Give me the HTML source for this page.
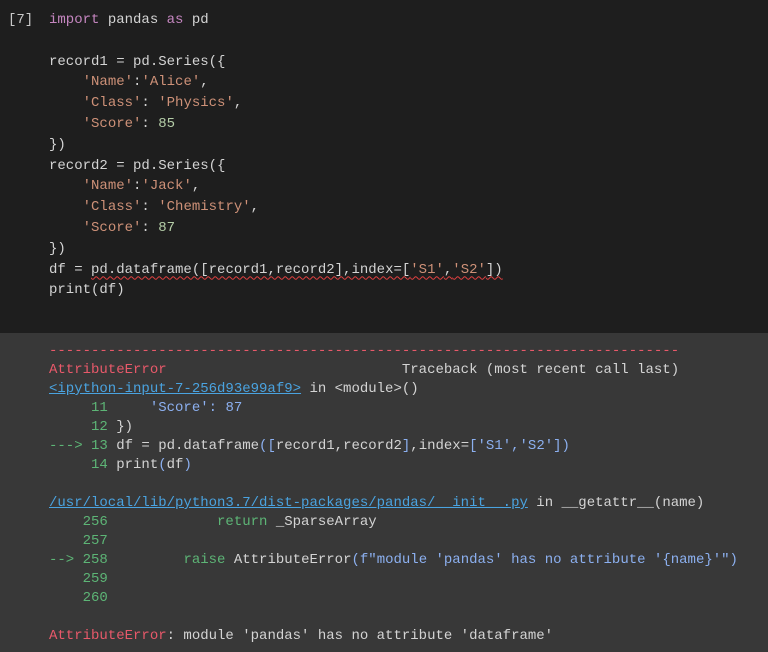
<!DOCTYPE html>
<html><head><meta charset="utf-8"><style>
html,body{margin:0;padding:0;width:768px;height:652px;overflow:hidden;font-family:"Liberation Mono",monospace;font-size:14px}
.top{position:absolute;left:0;top:0;width:768px;height:333px;background:#1e1e1e;color:#d4d4d4}
.out{position:absolute;left:0;top:333px;width:768px;height:319px;background:#383838;color:#d4d4d4}
pre{margin:0;font:inherit;white-space:pre}
.code{position:absolute;left:49px;top:10px;line-height:20.8px}
.num7{position:absolute;left:8px;top:10px;line-height:20.8px;color:#c8c8c8}
.o{position:absolute;left:49px;top:9px;line-height:19px}
.k{color:#c586c0}.s{color:#ce9178}.n{color:#b5cea8}
.r{color:#e8596a}.l{color:#4aa3e0;text-decoration:underline}.g{color:#5db576}.b{color:#8cb0f0}
.w{text-decoration:underline wavy #e04040;text-decoration-thickness:1px;text-underline-offset:3px}
</style></head><body>
<div class="top">
<pre class="num7">[7]</pre>
<pre class="code"><span class="k">import</span> pandas <span class="k">as</span> pd

record1 = pd.Series({
    <span class="s">'Name'</span>:<span class="s">'Alice'</span>,
    <span class="s">'Class'</span>: <span class="s">'Physics'</span>,
    <span class="s">'Score'</span>: <span class="n">85</span>
})
record2 = pd.Series({
    <span class="s">'Name'</span>:<span class="s">'Jack'</span>,
    <span class="s">'Class'</span>: <span class="s">'Chemistry'</span>,
    <span class="s">'Score'</span>: <span class="n">87</span>
})
df = <span class="w">pd.dataframe([record1,record2],index=[<span class="s">'S1'</span>,<span class="s">'S2'</span>])</span>
print(df)</pre>
</div>
<div class="out">
<pre class="o"><span class="r">---------------------------------------------------------------------------</span>
<span class="r">AttributeError</span>                            Traceback (most recent call last)
<span class="l">&lt;ipython-input-7-256d93e99af9&gt;</span> in &lt;module&gt;()
<span class="g">     11</span>     <span class="b">'Score': 87</span>
<span class="g">     12</span> })
<span class="g">---&gt; 13</span> df = pd.dataframe<span class="b">([</span>record1,record2<span class="b">]</span>,index=<span class="b">['S1','S2'])</span>
<span class="g">     14</span> print<span class="b">(</span>df<span class="b">)</span>

<span class="l">/usr/local/lib/python3.7/dist-packages/pandas/__init__.py</span> in __getattr__(name)
<span class="g">    256</span>             <span class="g">return</span> _SparseArray
<span class="g">    257</span>
<span class="g">--&gt; 258</span>         <span class="g">raise</span> AttributeError<span class="b">(f"module 'pandas' has no attribute '{name}'")</span>
<span class="g">    259</span>
<span class="g">    260</span>

<span class="r">AttributeError</span>: module 'pandas' has no attribute 'dataframe'</pre>
</div>
</body></html>
